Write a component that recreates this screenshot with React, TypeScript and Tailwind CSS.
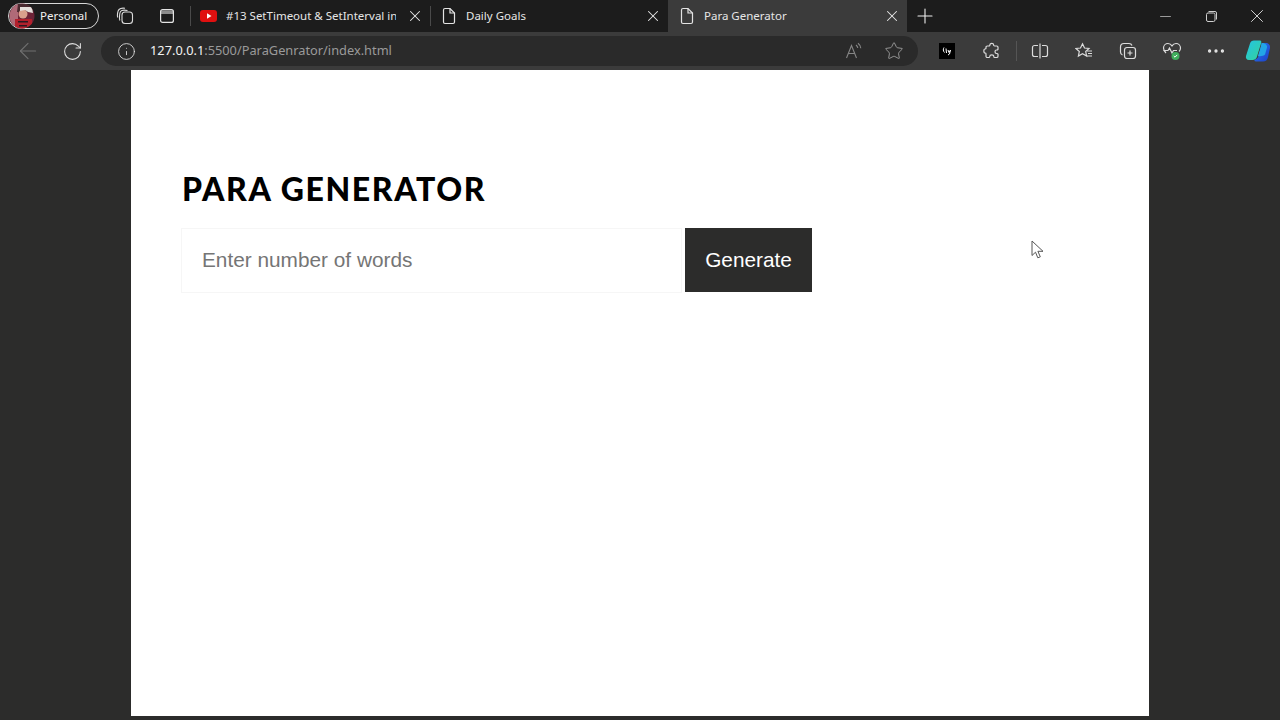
import { ArrowLeft, Info, Minus, MoreHorizontal, Plus, RotateCw, Star, X } from "lucide-react";

const FileIcon = () => (
  <svg width="16" height="18" viewBox="0 0 16 18" fill="none" stroke="#e4e4e4" strokeWidth="1.2">
    <path d="M2.5 3a1.5 1.5 0 0 1 1.5-1.5h5l4.5 4.5v9a1.5 1.5 0 0 1-1.5 1.5H4A1.5 1.5 0 0 1 2.5 15z" />
    <path d="M9 1.5V6h4.5" />
  </svg>
);

const Avatar = () => (
  <svg width="26" height="26" viewBox="0 0 26 26" className="shrink-0">
    <defs>
      <clipPath id="av"><circle cx="13" cy="13" r="12.5" /></clipPath>
    </defs>
    <g clipPath="url(#av)">
      <rect width="26" height="26" fill="#6e2438" />
      <rect x="0" y="0" width="9" height="26" fill="#b06a78" />
      <path d="M9 1h12l3 8H8z" fill="#4a2a30" />
      <rect x="6" y="16" width="17" height="10" fill="#b3202c" />
      <circle cx="14" cy="11" r="4.500" fill="#d9a08c" />
      <path d="M11 4h12l1 6-5-1-3-2-5 1z" fill="#e6e0dc" />
      <rect x="9" y="18" width="10" height="1.500" fill="#2a1a22" />
      <rect x="10" y="22" width="8" height="1.500" fill="#2a1a22" />
    </g>
  </svg>
);

const Workspaces = () => (
  <svg width="18" height="18" viewBox="0 0 18 18" fill="none" stroke="#dcdcdc" strokeWidth="1.1">
    <rect x="6" y="5" width="10.5" height="11.5" rx="3" />
    <path d="M4 13.5C3 12.5 3.5 6 4.5 4.5S9 3 11.5 3.5" />
    <path d="M1.8 10.5C1 8.5 1.5 4 3 2.5S7 1 9 1.3" />
  </svg>
);

const VerticalTabs = () => (
  <svg width="16" height="16" viewBox="0 0 16 16" fill="none" stroke="#e4e4e4" strokeWidth="1.2">
    <path d="M2 2.500h12v3.500H2z" fill="#8c8c8c" stroke="none" />
    <rect x="1.600" y="1.600" width="12.800" height="12.800" rx="2" />
  </svg>
);

const YouTube = () => (
  <svg width="17" height="12" viewBox="0 0 17 12" className="shrink-0">
    <rect width="17" height="12" rx="3" fill="#e01010" />
    <path d="M7 3.300 11.500 6 7 8.700z" fill="#fff" />
  </svg>
);

const ReadAloud = () => (
  <svg width="18" height="18" viewBox="0 0 18 18" fill="none" stroke="#858585" strokeWidth="1.1">
    <path d="M1.500 16 6.500 3.500 11.500 16M3.400 11.500h6.200" />
    <path d="M11 3c1 .8 1.600 1.700 1.800 3M13 1.300c1.600 1.200 2.600 3 2.800 5" />
  </svg>
);

const Puzzle = () => (
  <svg width="18" height="18" viewBox="0 0 18 18" fill="none" stroke="#dcdcdc" strokeWidth="1.2">
    <path d="M7 2.500c0-1.500 3.500-1.500 3.500 0 0 1 .3 1.500 1.200 1.500h2c.8 0 1.300.5 1.300 1.300v2c0 .8-1 .7-1.500.7-2 0-2 3.500 0 3.500.5 0 1.500 0 1.500.7v2c0 .8-.5 1.300-1.300 1.300H11.500c-.8 0-.7-.8-.7-1.200 0-2-4-2-4 0 0 .4 0 1.200-.7 1.200H4.300c-.8 0-1.300-.5-1.300-1.300v-2.500c0-.6-.7-.7-1-.7-1.500 0-1.500-4 0-4 .3 0 1-.1 1-.7V5.300C3 4.500 3.500 4 4.300 4h1.500C6.500 4 7 3.500 7 2.500z" />
  </svg>
);

const SplitScreen = () => (
  <svg width="18" height="18" viewBox="0 0 18 18" fill="none" stroke="#dcdcdc" strokeWidth="1.2">
    <path d="M7 3.500H3.500a2 2 0 0 0-2 2v7a2 2 0 0 0 2 2H7M11 3.500h3.500a2 2 0 0 1 2 2v7a2 2 0 0 1-2 2H11" />
    <path d="M9 1.500v15" />
  </svg>
);

const Favorites = () => (
  <svg width="18" height="18" viewBox="0 0 18 18" fill="none" stroke="#dcdcdc" strokeWidth="1.2">
    <path d="M7.500 1.800 9.500 6l4.500.5-3.300 3 .9 4.500-4.100-2.300-4.100 2.300.9-4.500L1 6.500 5.500 6z" />
    <path d="M12 9h5M13 11.500h4M12 14h5" />
  </svg>
);

const Collections = () => (
  <svg width="18" height="18" viewBox="0 0 18 18" fill="none" stroke="#dcdcdc" strokeWidth="1.2">
    <rect x="5.500" y="5.500" width="11" height="11" rx="2.500" />
    <path d="M11 8.500v5M8.500 11h5" />
    <path d="M3.500 13C2 12.500 1.500 11.500 1.500 10V5c0-2 1.500-3.500 3.500-3.500h5c1.500 0 2.500.6 3 2" />
  </svg>
);

const Health = () => (
  <svg width="20" height="20" viewBox="0 0 20 20" fill="none">
    <path d="M4 12C2 10 1.500 8.500 1.500 7c0-2.500 2-4.500 4.500-4.500 1.500 0 3 .8 4 2.300 1-1.500 2.500-2.300 4-2.300 2.500 0 4.500 2 4.500 4.500 0 1.500-.5 2.500-1.500 3.500" stroke="#dcdcdc" strokeWidth="1.200" />
    <path d="M1.500 9.500H6l1.500-2.500L10 12l1.500-2.500H15" stroke="#dcdcdc" strokeWidth="1.200" />
    <circle cx="13.500" cy="15" r="4" fill="#3fae5c" />
    <path d="m11.800 15 1.200 1.200 2.200-2.300" stroke="#fff" strokeWidth="1" />
  </svg>
);

const Copilot = () => (
  <svg width="26" height="26" viewBox="0 0 26 26">
    <defs>
      <linearGradient id="cpa" x1="0" y1="0" x2="1" y2="1">
        <stop offset="0" stopColor="#22c3e6" />
        <stop offset="1" stopColor="#35d39a" />
      </linearGradient>
      <linearGradient id="cpb" x1="0" y1="0" x2="1" y2="1">
        <stop offset="0" stopColor="#2a7bf0" />
        <stop offset="1" stopColor="#1c3fc8" />
      </linearGradient>
    </defs>
    <path d="M9 2.500h6c1.500 0 1.500 1.500 1 3l-4 13c-.5 2-2 3.500-4.500 3.500H4c-2.500 0-3.500-2-3-4l4-12.500C5.500 3.500 7 2.500 9 2.500z" fill="url(#cpa)" />
    <path d="M17 5h3.500c3 0 5 2 4.500 5l-2 9c-.5 3-2.500 4.500-5 4.500H11c-1.500 0-2-1-1-2 2-.5 3-1.500 3.500-3.500z" fill="url(#cpb)" />
    <path d="M16.500 5c-.5 4-3 11-3.500 13 2 .5 6 0 7-1.500l2-7C22.500 7 20 5 16.500 5z" fill="#22a6e6" />
  </svg>
);

const ExtLogo = () => (
  <svg width="16" height="16" viewBox="0 0 16 16" fill="none" stroke="#fff" strokeWidth="1">
    <rect width="16" height="16" fill="#000" stroke="none" />
    <path d="M5 4.500C4 6 4 8 5.500 9.500M7 5.500 7.500 10M9 7l1 2.500L11.500 7l-1 4-1.500 1" />
  </svg>
);

const Cursor = () => (
  <svg width="13" height="20" viewBox="0 0 13 20" fill="#fff" stroke="#555" strokeWidth="1">
    <path d="M1 1v14.500l3.500-3.300 2.300 5.600 2.500-1-2.400-5.500H12z" />
  </svg>
);

function Tab({ icon, title, active, w }: { icon: React.ReactNode; title: string; active?: boolean; w: string }) {
  return (
    <div className={`${w} h-8 flex items-center shrink-0 pr-[6px] ${active ? "bg-[#3b3b3b] pl-[10px]" : "pl-[9px]"}`}>
      <span className="w-[17px] flex justify-center shrink-0">{icon}</span>
      <span className="ml-[9px] flex-1 min-w-0 text-[11.5px] text-[#e6e6e6] whitespace-nowrap overflow-hidden">{title}</span>
      <X size={18} color="#e8e8e8" strokeWidth={1.4} className="shrink-0 ml-[10px]" />
    </div>
  );
}

function ToolBtn({ children, w = "w-[44px]" }: { children: React.ReactNode; w?: string }) {
  return <div className={`${w} h-full flex items-center justify-center shrink-0`}>{children}</div>;
}

export default function App() {
  return (
    <div className="relative w-[1280px] h-[720px] overflow-hidden flex flex-col bg-[#2c2c2b] font-['Noto_Sans',sans-serif]">
      {/* tab strip */}
      <div className="h-8 flex items-center bg-[#1c1c1c] shrink-0">
        <div className="ml-[8px] w-[91px] h-[26px] rounded-full border border-[#d8d8d8] flex items-center shrink-0">
          <Avatar />
          <span className="ml-[5px] text-[11.5px] text-[#f0f0f0]">Personal</span>
        </div>
        <div className="ml-[5px] w-[42px] flex justify-center shrink-0"><Workspaces /></div>
        <div className="w-[42px] flex justify-center shrink-0"><VerticalTabs /></div>
        <div className="ml-[2px] w-px h-5 bg-[#4a4a4a] shrink-0" />
        <Tab w="w-[239px]" icon={<YouTube />} title="#13 SetTimeout & SetInterval in" />
        <div className="w-px h-5 bg-[#4a4a4a] shrink-0" />
        <Tab w="w-[237px]" icon={<FileIcon />} title="Daily Goals" />
        <Tab w="w-[239px]" active icon={<FileIcon />} title="Para Generator" />
        <div className="ml-[6px] shrink-0"><Plus size={24} color="#eeeeee" strokeWidth={1.1} /></div>
        <div className="ml-auto flex items-center shrink-0">
          <div className="w-[46px] flex justify-center"><Minus size={17} color="#cfcfcf" strokeWidth={1} /></div>
          <div className="w-[46px] flex justify-center">
            <svg width="11" height="11" viewBox="0 0 11 11" fill="none" stroke="#cfcfcf" strokeWidth="1">
              <rect x="0.500" y="2" width="8.500" height="8.500" rx="1.500" />
              <path d="M2.500.5h6.500a1.500 1.500 0 0 1 1.500 1.500v6.500" />
            </svg>
          </div>
          <div className="w-[46px] flex justify-center"><X size={22} color="#e0e0e0" strokeWidth={1} /></div>
        </div>
      </div>

      {/* toolbar */}
      <div className="h-[38px] flex items-center bg-[#3b3b3b] shrink-0 pl-[6px]">
        <ToolBtn><ArrowLeft size={26} color="#707070" strokeWidth={1} /></ToolBtn>
        <ToolBtn><RotateCw size={21} color="#e0e0e0" strokeWidth={1.2} /></ToolBtn>
        <div className="ml-[7px] w-[817px] h-[30px] rounded-full bg-[#2a2a2a] flex items-center shrink-0">
          <Info size={19} color="#e0e0e0" strokeWidth={1.1} className="ml-[16px] shrink-0" />
          <span className="ml-[14px] text-[12.8px] text-[#f2f2f2]">127.0.0.1<span className="text-[#9a9a9a]">:5500/ParaGenrator/index.html</span></span>
          <div className="ml-auto flex items-center">
            <ToolBtn w="w-[40px]"><ReadAloud /></ToolBtn>
            <ToolBtn w="w-[40px]"><Star size={20} color="#9c9c9c" strokeWidth={1.1} /></ToolBtn>
            <div className="w-[4px]" />
          </div>
        </div>
        <div className="ml-[7px]" />
        <ToolBtn><ExtLogo /></ToolBtn>
        <ToolBtn w="w-[44px] ml-px"><Puzzle /></ToolBtn>
        <div className="w-[4px] h-full flex items-center justify-center shrink-0"><div className="w-px h-5 bg-[#555555]" /></div>
        <ToolBtn><SplitScreen /></ToolBtn>
        <ToolBtn><Favorites /></ToolBtn>
        <ToolBtn><Collections /></ToolBtn>
        <ToolBtn><Health /></ToolBtn>
        <ToolBtn><MoreHorizontal size={22} color="#e8e8e8" strokeWidth={1.6} /></ToolBtn>
        <ToolBtn w="w-[40px]"><Copilot /></ToolBtn>
      </div>

      {/* page */}
      <div className="flex-1 flex pb-[4px] min-h-0">
        <div className="w-[131px] shrink-0" />
        <div className="w-[1018px] shrink-0 bg-white pl-[50px] pt-[100px]">
          <h1 className="ml-px h-[38px] text-[32px] leading-[37px] tracking-[1.6px] font-black text-black whitespace-nowrap font-['Lato',sans-serif]">PARA GENERATOR</h1>
          <div className="mt-[20px] flex items-start">
            <input
              placeholder="Enter number of words"
              className="w-[501px] h-[65px] border border-[#f6f6f6] pl-[20px] pb-[2px] text-[20.8px] outline-none placeholder:text-[#757575] font-['Liberation_Sans',sans-serif]"
            />
            <button className="ml-[3px] w-[127px] h-[64px] bg-[#2c2c2b] text-white text-[20.8px] font-['Liberation_Sans',sans-serif]">Generate</button>
          </div>
        </div>
      </div>

      {/* mouse pointer over the page */}
      <div className="absolute left-[1031px] top-[240px]"><Cursor /></div>
    </div>
  );
}
